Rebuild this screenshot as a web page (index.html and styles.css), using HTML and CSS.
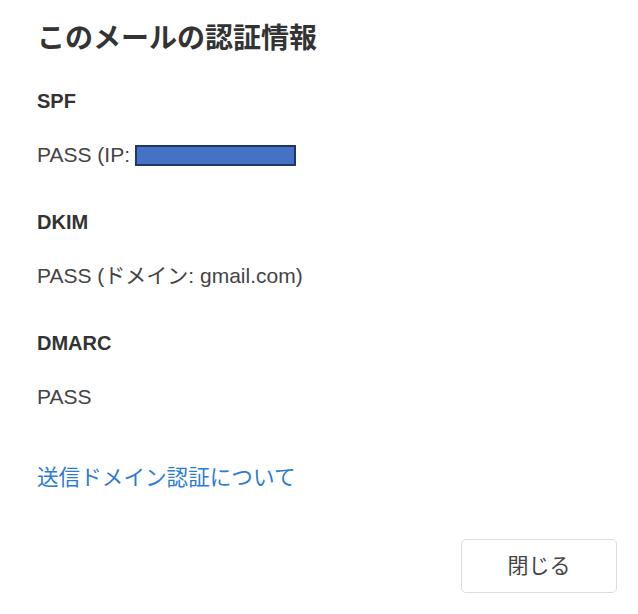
FILE: index.html
```html
<!DOCTYPE html>
<html lang="ja">
<head>
<meta charset="utf-8">
<title>このメールの認証情報</title>
<link rel="stylesheet" href="styles.css">
</head>
<body>
<div class="dialog">
  <h1 class="title">このメールの認証情報</h1>
  <section class="section">
    <div class="label">SPF</div>
    <div class="value value-ip"><span>PASS (IP:</span><span class="redact"></span></div>
  </section>
  <section class="section">
    <div class="label">DKIM</div>
    <div class="value">PASS (ドメイン: gmail.com)</div>
  </section>
  <section class="section">
    <div class="label">DMARC</div>
    <div class="value">PASS</div>
  </section>
  <a class="link" href="#">送信ドメイン認証について</a>
  <div class="footer">
    <button class="close" type="button">閉じる</button>
  </div>
</div>
</body>
</html>
```

FILE: styles.css
```css
html, body {
  margin: 0;
  padding: 0;
  background: #ffffff;
}
body {
  font-family: "Liberation Sans", "Noto Sans CJK JP", sans-serif;
  color: #333333;
}
.dialog {
  padding: 19px 21px 0 37px;
  display: flex;
  flex-direction: column;
}
.title {
  margin: 0 0 27px 0;
  font-size: 28px;
  line-height: 40px;
  font-weight: bold;
  color: #333333;
}
.section {
  margin-bottom: 37px;
}
.section:last-of-type {
  margin-bottom: 51px;
}
.label {
  font-size: 20px;
  line-height: 30px;
  font-weight: bold;
  color: #333333;
  margin-bottom: 24px;
}
.value {
  font-size: 21px;
  line-height: 30px;
  color: #444444;
}
.value-ip {
  display: flex;
  align-items: center;
  gap: 5px;
}
.redact {
  display: block;
  width: 157px;
  height: 17px;
  background: #4472c4;
  border: 2px solid #1f3864;
  margin-top: 1px;
}
.link {
  font-size: 21.6px;
  line-height: 30px;
  color: #2b7bd6;
  text-decoration: none;
  align-self: flex-start;
}
.footer {
  display: flex;
  justify-content: flex-end;
  margin-top: 46px;
}
.close {
  width: 156px;
  height: 54px;
  padding: 0 0 4px 0;
  background: #ffffff;
  border: 1px solid #dddddd;
  border-radius: 5px;
  font-family: "Liberation Sans", "Noto Sans CJK JP", sans-serif;
  font-size: 21px;
  color: #444444;
}
```
